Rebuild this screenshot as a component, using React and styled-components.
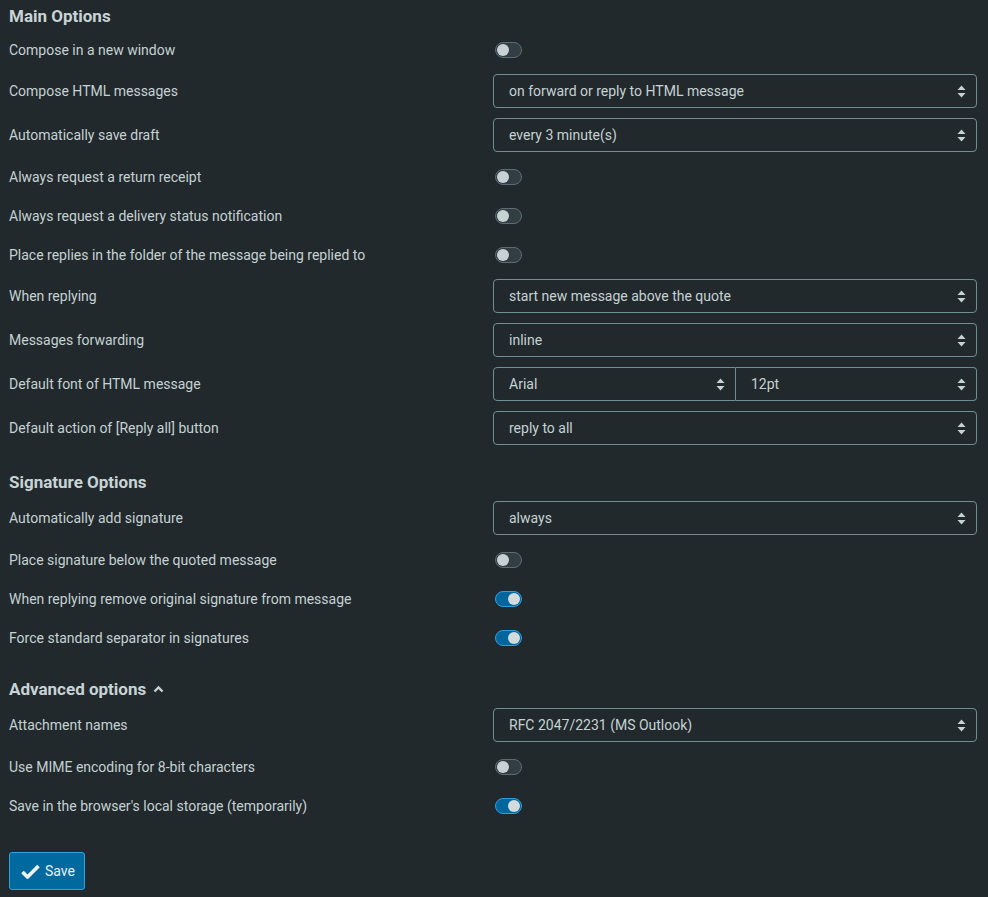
import React from 'react'
import styled, { createGlobalStyle } from 'styled-components'

const GlobalStyle = createGlobalStyle`
	html, body {
		margin: 0;
		padding: 0;
		background: #21292c;
	}
	body {
		font-family: Roboto, "Liberation Sans", sans-serif;
		font-size: 14px;
		color: #c5d1d3;
	}
`

const Page = styled.form`
	padding: 0 11px 7px 9px;
`

const Heading = styled.h2`
	margin: ${p => p.$first ? '0' : '16px'} 0 0;
	padding: 6px 0 4px;
	font-size: 17px;
	line-height: 20px;
	font-weight: 700;
	color: #c8d3d6;
	display: flex;
	align-items: center;
	gap: 7px;
`

const Row = styled.div`
	display: grid;
	grid-template-columns: 484px 1fr;
	align-items: center;
	height: ${p => p.$tall ? '44px' : '39px'};
`

const Label = styled.label`
	line-height: 20px;
`

const SelectWrap = styled.div`
	position: relative;
	flex: ${p => p.$width ? `0 0 ${p.$width}px` : '1 1 auto'};
`

const Select = styled.select`
	appearance: none;
	display: block;
	width: 100%;
	height: 34px;
	margin: 0;
	padding: 0 32px 0 15px;
	background: #21292c;
	color: #c5d1d3;
	font: inherit;
	border: 1px solid #6f8e94;
	border-left-width: ${p => p.$joined ? 0 : '1px'};
	border-radius: ${p => p.$side === 'left' ? '4px 0 0 4px' : p.$side === 'right' ? '0 4px 4px 0' : '4px'};
	outline: none;
`

const Arrows = styled.svg`
	position: absolute;
	right: 11px;
	top: 50%;
	width: 9px;
	height: 13px;
	margin-top: -6.5px;
	pointer-events: none;
`

const Pair = styled.div`
	display: flex;
`

const Switch = styled.span`
	position: relative;
	display: block;
	box-sizing: border-box;
	width: 27px;
	height: 16px;
	margin-left: 2px;
	border-radius: 8px;
	border: 1px solid ${p => p.$on ? '#2a9fe6' : '#5b6d72'};
	background: ${p => p.$on ? '#00669c' : '#323e43'};

	&::after {
		content: '';
		position: absolute;
		top: 1px;
		left: ${p => p.$on ? '12px' : '1px'};
		width: 12px;
		height: 12px;
		border-radius: 50%;
		background: ${p => p.$on ? '#d3dbdd' : '#c8d2d4'};
	}
`

const SaveButton = styled.button`
	display: inline-flex;
	align-items: center;
	gap: 5px;
	box-sizing: border-box;
	height: 38px;
	width: 76px;
	margin-top: 27px;
	padding: 0 0 0 11px;
	background: #006a9e;
	border: 1px solid #27a3e6;
	border-radius: 3px;
	color: #e8eef0;
	font: inherit;
	font-size: 14px;
`

const SortArrows = () => (
	<Arrows viewBox="0 0 9 13">
		<path d="M4.5 0.5 L8.5 5 H0.5 Z M4.5 12.5 L8.5 8 H0.5 Z" fill="#c5d1d3" />
	</Arrows>
)

const Dropdown = ({ value, width, side, joined }) => (
	<SelectWrap $width={width}>
		<Select $side={side} $joined={joined} defaultValue={value}>
			<option>{value}</option>
		</Select>
		<SortArrows />
	</SelectWrap>
)

const ToggleRow = ({ label, on }) => (
	<Row>
		<Label>{label}</Label>
		<div><Switch $on={on} /></div>
	</Row>
)

const SelectRow = ({ label, value }) => (
	<Row $tall>
		<Label>{label}</Label>
		<Dropdown value={value} />
	</Row>
)

const ChevronUp = () => (
	<svg width="11" height="8" viewBox="0 0 11 8">
		<path d="M1.5 6.5 L5.5 2.5 L9.5 6.5" fill="none" stroke="#c8d3d6" strokeWidth="2.4" />
	</svg>
)

const Check = () => (
	<svg width="19" height="15" viewBox="0 0 19 15">
		<path d="M1.5 8 L6.5 13 L17.5 2" fill="none" stroke="#eef3f5" strokeWidth="3.6" strokeLinejoin="round" />
	</svg>
)

export default function App() {
	return (
		<>
			<GlobalStyle />
			<Page onSubmit={e => e.preventDefault()}>
				<Heading $first>Main Options</Heading>
				<ToggleRow label="Compose in a new window" />
				<SelectRow label="Compose HTML messages" value="on forward or reply to HTML message" />
				<SelectRow label="Automatically save draft" value="every 3 minute(s)" />
				<ToggleRow label="Always request a return receipt" />
				<ToggleRow label="Always request a delivery status notification" />
				<ToggleRow label="Place replies in the folder of the message being replied to" />
				<SelectRow label="When replying" value="start new message above the quote" />
				<SelectRow label="Messages forwarding" value="inline" />
				<Row $tall>
					<Label>Default font of HTML message</Label>
					<Pair>
						<Dropdown value="Arial" width={243} side="left" />
						<Dropdown value="12pt" side="right" joined />
					</Pair>
				</Row>
				<SelectRow label="Default action of [Reply all] button" value="reply to all" />

				<Heading>Signature Options</Heading>
				<SelectRow label="Automatically add signature" value="always" />
				<ToggleRow label="Place signature below the quoted message" />
				<ToggleRow label="When replying remove original signature from message" on />
				<ToggleRow label="Force standard separator in signatures" on />

				<Heading>Advanced options <ChevronUp /></Heading>
				<SelectRow label="Attachment names" value="RFC 2047/2231 (MS Outlook)" />
				<ToggleRow label="Use MIME encoding for 8-bit characters" />
				<ToggleRow label="Save in the browser's local storage (temporarily)" on />

				<SaveButton type="submit"><Check />Save</SaveButton>
			</Page>
		</>
	)
}
